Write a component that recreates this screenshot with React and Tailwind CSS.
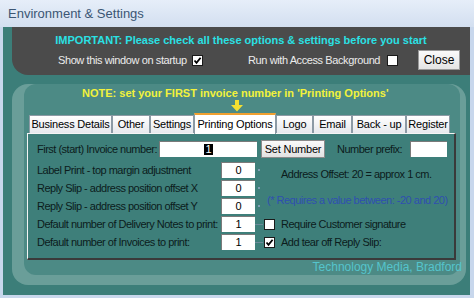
import { useState } from "react";

const label = "text-[11px] tracking-[-0.5px] text-[#0c1c1c] leading-none whitespace-nowrap";

function Check({ checked }) {
  return (
    <span className="inline-flex items-center justify-center w-[11px] h-[11px] bg-white border border-[#1a1a1a] shrink-0">
      {checked && (
        <svg width="9" height="9" viewBox="0 0 9 9">
          <path d="M1.5 4.5 L3.5 6.8 L7.6 1.8" fill="none" stroke="#000" strokeWidth="1.8" />
        </svg>
      )}
    </span>
  );
}

function Field({ value }) {
  return (
    <div className="w-[34px] h-[16px] bg-white border-t border-l border-t-[#7a7a7a] border-l-[#7a7a7a] flex items-center justify-center text-[11px] leading-none text-black shrink-0">
      {value}
    </div>
  );
}

function Tab({ children, active, w }) {
  if (active) {
    return (
      <div className={w + " relative z-10 -mb-[1px] h-[21px] bg-white border-t-2 border-t-[#f0a030] border-x border-x-[#8c9aa5] flex items-center justify-center text-[11px] tracking-[-0.2px] text-black whitespace-nowrap"}>
        {children}
      </div>
    );
  }
  return (
    <div className={w + " h-[18px] bg-gradient-to-b from-white to-[#e6e8ec] border border-b-0 border-[#8c9aa5] flex items-center justify-center text-[11px] tracking-[-0.2px] text-black whitespace-nowrap"}>
      {children}
    </div>
  );
}

export default function App() {
  const [showStartup] = useState(true);
  const tabs = [
    ["Business  Details", "w-[83px]"],
    ["Other", "w-[38px]"],
    ["Settings", "w-[44px]"],
    ["Printing Options", "w-[82px]"],
    ["Logo", "w-[37px]"],
    ["Email", "w-[39px]"],
    ["Back - up", "w-[54px]"],
    ["Register", "w-[44px]"],
  ];
  const rows = [
    ["Label Print -  top margin adjustment", "0"],
    ["Reply Slip - address position offset X", "0"],
    ["Reply Slip - address position offset Y", "0"],
    ["Default number of Delivery Notes to print:", "1"],
    ["Default number of Invoices to print:", "1"],
  ];

  return (
    <div
      className="w-[474px] h-[298px] bg-[#c8d7ec] flex flex-col overflow-hidden"
      style={{ fontFamily: '"Liberation Sans", Arial, sans-serif' }}
    >
      {/* Title bar */}
      <div className="h-[27px] bg-gradient-to-b from-[#e6eef9] to-[#d3dff0] flex items-center pl-[8px]">
        <span className="text-[13px] text-[#3b5674]">Environment &amp; Settings</span>
      </div>

      {/* Body */}
      <div className="flex-1 ml-[3px] mr-[4px] mb-[3px] bg-[#3c7e79] flex flex-col">
        {/* Dark panel */}
        <div className="ml-[9px] h-[48px] bg-[#4b4b4b] rounded-bl-[16px] flex flex-col items-center pt-[6px]">
          <div className="text-[11px] font-bold text-[#2ae0e4] leading-[14px] whitespace-nowrap">
            IMPORTANT: Please check all these options &amp; settings before you start
          </div>
          <div className="self-stretch flex items-center mt-[3px] pl-[46px]">
            <span className="w-[134px] text-[11px] tracking-[-0.4px] text-[#ececec] whitespace-nowrap">Show this window on startup</span>
            <Check checked={showStartup} />
            <span className="ml-[45px] w-[139px] text-[11px] tracking-[-0.4px] text-[#ececec] whitespace-nowrap">Run with Access Background</span>
            <Check />
            <button className="ml-[20px] w-[42px] h-[20px] bg-gradient-to-b from-[#fafafa] to-[#e4e4e4] border border-[#9a9a9a] text-[12px] text-black">
              Close
            </button>
          </div>
        </div>

        {/* Ring panel */}
        <div className="mt-[9px] ml-[9px] mr-[4px] bg-[#6a9e99] rounded-[16px] pl-[12px] pr-[6px] pb-[10px] flex-1 flex flex-col">
          <div className="flex-1 bg-[#4c8a85] rounded-[12px] flex flex-col relative">
            <div className="text-[11px] font-bold text-[#f2f23c] leading-[14px] pl-[58px] pt-[2px] whitespace-nowrap">
              NOTE: set your FIRST invoice number in 'Printing Options'
            </div>
            <div className="pl-[206px] h-[13px]">
              <svg width="14" height="12" viewBox="0 0 14 12">
                <path d="M5 0 H9 V5 H13 L7 11.5 L1 5 H5 Z" fill="#f4e030" />
              </svg>
            </div>

            {/* Tabs */}
            <div className="flex items-end pl-[5px] h-[20px]">
              {tabs.map(([t, w], i) => (
                <Tab key={t} w={w} active={i === 3}>{t}</Tab>
              ))}
            </div>

            {/* Tab content box */}
            <div className="ml-[3px] w-[429px] h-[127px] bg-[#3e7f7a] border-t border-l border-t-[#f4f4f4] border-l-[#f4f4f4] border-r-2 border-b-2 border-r-[#3a3a3a] border-b-[#3a3a3a] pl-[9px] pt-[6px]">
              {/* First row */}
              <div className="flex items-center h-[18px]">
                <span className={label + " w-[122px]"}>First (start) Invoice number:</span>
                <div className="w-[98px] h-[16px] bg-white border-t border-l border-[#7a7a7a] flex items-center justify-center">
                  <span className="bg-black text-white text-[11px] leading-none px-[1px]">1</span>
                </div>
                <button className="ml-[4px] w-[64px] h-[18px] bg-gradient-to-b from-[#fafafa] to-[#e2e2e2] border border-[#8a8a8a] text-[11px] tracking-[-0.2px] text-black whitespace-nowrap">
                  Set Number
                </button>
                <span className={label + " ml-[12px] w-[73px]"}>Number prefix:</span>
                <div className="w-[37px] h-[16px] bg-white border-t border-l border-[#7a7a7a]" />
              </div>

              <div className="flex mt-[3px]">
                {/* Left column */}
                <div className="flex flex-col w-[227px] shrink-0">
                  {rows.map(([t, v], i) => (
                    <div key={t} className="flex items-center h-[18px]">
                      <span className={label + " w-[184px]"}>{t}</span>
                      <Field value={v} />
                      {i < 3 ? (
                        <span className="ml-[3px] w-[2px] h-[2px] bg-[#7f9fb5]" />
                      ) : (
                        <span className="w-[8px] h-[1px] bg-[#6c8a9a]" />
                      )}
                    </div>
                  ))}
                </div>

                {/* Right column */}
                <div className="flex flex-col">
                  <div className={label + " h-[18px] mt-[4px] pl-[17px] flex items-center"}>
                    Address Offset: 20 = approx 1 cm.
                  </div>
                  <div className="h-[18px] mt-[8px] pl-[3px] flex items-center text-[11px] tracking-[-0.5px] text-[#2f4fb0] whitespace-nowrap">
                    (* Requires a value between: -20 and 20)
                  </div>
                  <div className="h-[18px] mt-[6px] flex items-center">
                    <Check />
                    <span className={label + " ml-[6px]"}>Require Customer signature</span>
                  </div>
                  <div className="h-[18px] flex items-center">
                    <Check checked />
                    <span className={label + " ml-[6px]"}>Add tear off Reply Slip:</span>
                  </div>
                </div>
              </div>
            </div>

            <div className="absolute right-[-2px] bottom-[-1px] text-[12px] text-[#55c4cc] whitespace-nowrap">
              Technology Media, Bradford
            </div>
          </div>
        </div>
        <div className="h-[10px]" />
      </div>
    </div>
  );
}
